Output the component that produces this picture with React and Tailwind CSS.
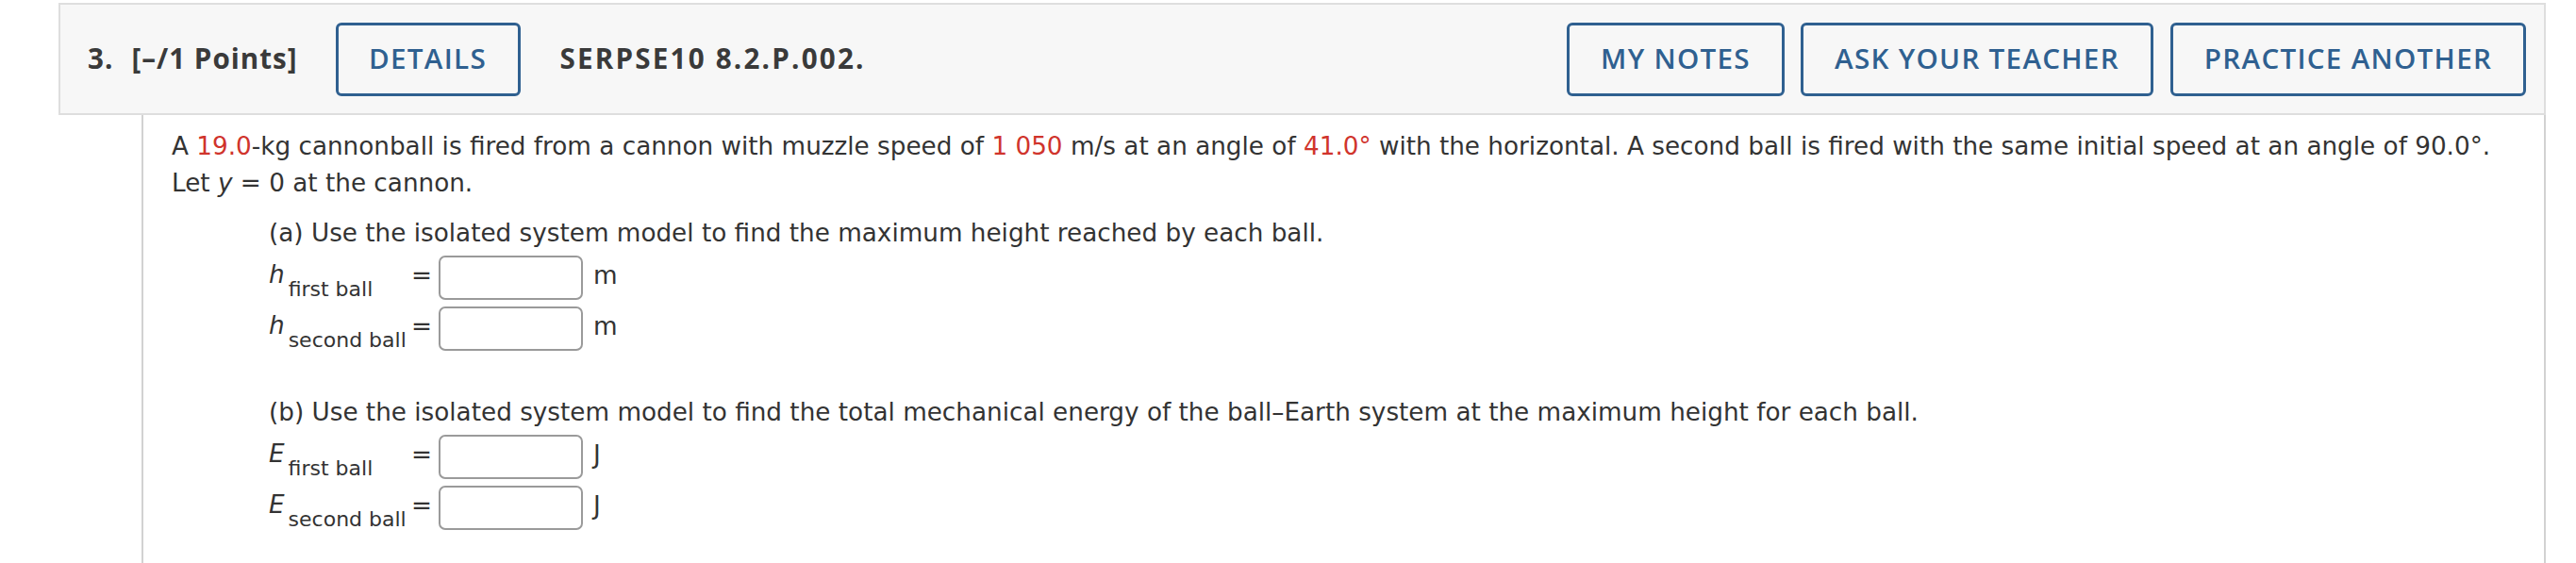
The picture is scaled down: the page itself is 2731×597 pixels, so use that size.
import React from "react";

const btn =
  "flex items-center justify-center h-[78px] border-[3px] border-[#2f6090] rounded-[6px] text-[#2f6090] font-semibold text-[29.6px] tracking-[1.3px] whitespace-nowrap";

function Row({ sym, sub, unit }) {
  return (
    <div className="flex items-center h-[47px]">
      <div className="w-[150px] pb-[5px] whitespace-nowrap leading-[26px]">
        <span className="italic">{sym}</span>
        <span className="relative top-[14px] ml-[4px] text-[22px]">{sub}</span>
      </div>
      <div className="w-[24px] text-center pb-[5px] leading-[26px]">=</div>
      <div className="ml-[6px] w-[153px] h-[47px] border-2 border-[#9a9a9a] rounded-[7px] bg-white" />
      <div className="ml-[11px] pb-[5px] leading-[26px]">{unit}</div>
    </div>
  );
}

const R = ({ children }) => <span className="text-[#d0342c]">{children}</span>;

export default function App() {
  return (
    <div className="w-[2731px] h-[597px] overflow-hidden bg-white">
      <div
        className="mt-[3px] ml-[62px] mr-[32px] h-[119px] border-2 border-[#dedede] bg-[#f7f7f7] flex items-center pl-[29px] pr-[19px] text-[#3a3a3a]"
        style={{ fontFamily: '"Open Sans", "Liberation Sans", sans-serif' }}
      >
        <span className="font-bold text-[29.6px] tracking-[1px] whitespace-nowrap">3.</span>
        <span className="ml-[19px] font-bold text-[29.6px] tracking-[1px] whitespace-nowrap">[–/1 Points]</span>
        <div className={btn + " ml-[40px] w-[196px]"}>DETAILS</div>
        <span className="ml-[42px] font-bold text-[29.6px] tracking-[2.2px] whitespace-nowrap">SERPSE10 8.2.P.002.</span>
        <div className="flex-1" />
        <div className={btn + " w-[231px]"}>MY NOTES</div>
        <div className={btn + " ml-[17px] w-[374px]"}>ASK YOUR TEACHER</div>
        <div className={btn + " ml-[18px] w-[377px]"}>PRACTICE ANOTHER</div>
      </div>
      <div
        className="ml-[150px] mr-[32px] h-[476px] border-l-2 border-r-2 border-[#d2d2d2] pl-[30px] pt-[14px] text-[#333] text-[26.25px]"
        style={{ fontFamily: '"DejaVu Sans", Verdana, sans-serif' }}
      >
        <div className="leading-[39px] whitespace-nowrap">
          A <R>19.0</R>-kg cannonball is fired from a cannon with muzzle speed of <R>1 050</R> m/s at an angle of{" "}
          <R>41.0°</R> with the horizontal. A second ball is fired with the same initial speed at an angle of 90.0°.
        </div>
        <div className="leading-[39px] whitespace-nowrap">
          Let <span className="italic">y</span> = 0 at the cannon.
        </div>
        <div className="ml-[103px]">
          <div className="mt-[14px] leading-[39px] whitespace-nowrap">
            (a) Use the isolated system model to find the maximum height reached by each ball.
          </div>
          <div className="mt-[4px]">
            <Row sym="h" sub="first ball" unit="m" />
          </div>
          <div className="mt-[7px]">
            <Row sym="h" sub="second ball" unit="m" />
          </div>
          <div className="mt-[46px] leading-[39px] whitespace-nowrap">
            (b) Use the isolated system model to find the total mechanical energy of the ball–Earth system at the
            maximum height for each ball.
          </div>
          <div className="mt-[4px]">
            <Row sym="E" sub="first ball" unit="J" />
          </div>
          <div className="mt-[7px]">
            <Row sym="E" sub="second ball" unit="J" />
          </div>
        </div>
      </div>
    </div>
  );
}
